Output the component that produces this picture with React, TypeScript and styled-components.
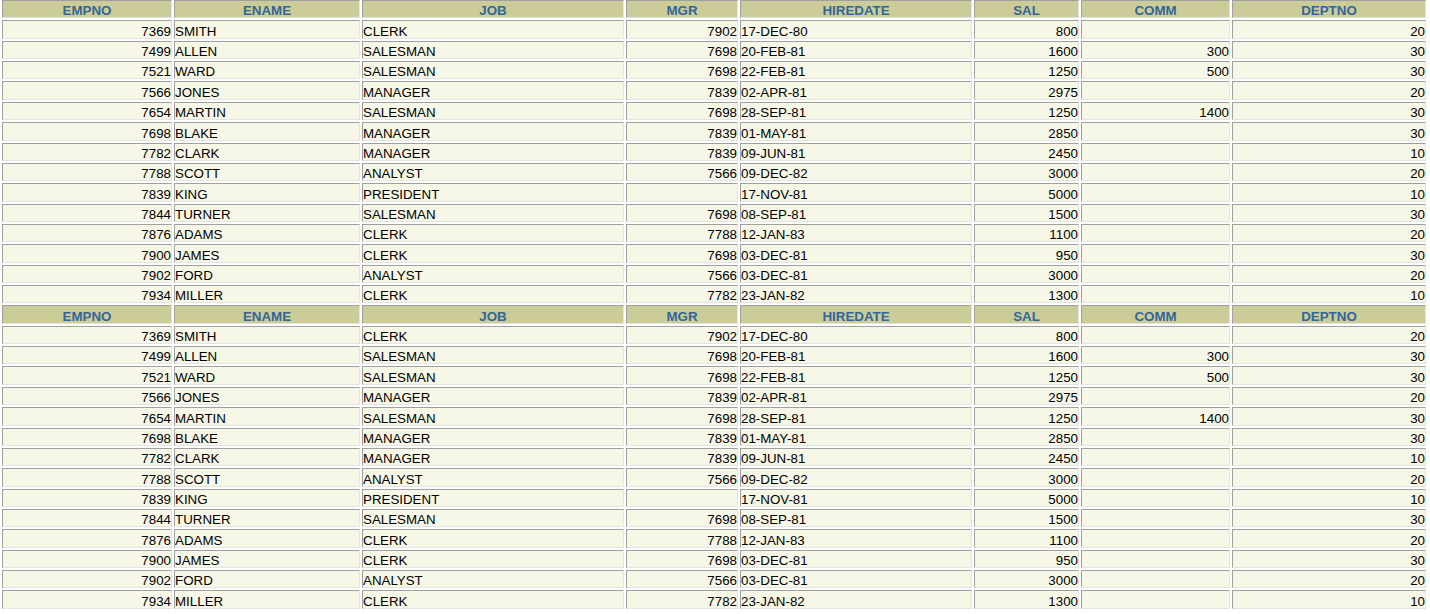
import React from "react";
import styled, { createGlobalStyle } from "styled-components";

const Global = createGlobalStyle`
  html, body { margin: 0; padding: 0; background: #ffffff; overflow: hidden; }
  body { font-family: "Liberation Sans", Arial, sans-serif; }
`;

const Table = styled.table`
  table-layout: fixed;
  width: 1428px;
  border-collapse: separate;
  border-spacing: 2px;
  margin-top: -2px;
`;

const HeadCell = styled.th<{ $w: number }>`
  box-sizing: border-box;
  width: ${(p) => p.$w}px;
  height: 18.36px;
  padding: 4.36px 0 0;
  vertical-align: top;
  font: bold 13.33px "Liberation Sans", Arial, sans-serif;
  line-height: 12px;
  color: #336699;
  background: #cccc99;
  text-align: center;
  border-style: solid;
  border-width: 1px;
  border-color: #a0a0a0 #e4e4e4 #e4e4e4 #a0a0a0;
  white-space: nowrap;
  overflow: hidden;
`;

const Cell = styled.td<{ $num?: boolean }>`
  box-sizing: border-box;
  height: 18.36px;
  padding: 4.36px 0 0;
  vertical-align: top;
  font: 13.33px "Liberation Sans", Arial, sans-serif;
  line-height: 12px;
  color: #000000;
  background: #f7f7e7;
  text-align: ${(p) => (p.$num ? "right" : "left")};
  border-style: solid;
  border-width: 1px;
  border-color: #a0a0a0 #e4e4e4 #e4e4e4 #a0a0a0;
  white-space: nowrap;
  overflow: hidden;
`;

type Emp = [number, string, string, number | null, string, number, number | null, number];

const emps: Emp[] = [
  [7369, "SMITH", "CLERK", 7902, "17-DEC-80", 800, null, 20],
  [7499, "ALLEN", "SALESMAN", 7698, "20-FEB-81", 1600, 300, 30],
  [7521, "WARD", "SALESMAN", 7698, "22-FEB-81", 1250, 500, 30],
  [7566, "JONES", "MANAGER", 7839, "02-APR-81", 2975, null, 20],
  [7654, "MARTIN", "SALESMAN", 7698, "28-SEP-81", 1250, 1400, 30],
  [7698, "BLAKE", "MANAGER", 7839, "01-MAY-81", 2850, null, 30],
  [7782, "CLARK", "MANAGER", 7839, "09-JUN-81", 2450, null, 10],
  [7788, "SCOTT", "ANALYST", 7566, "09-DEC-82", 3000, null, 20],
  [7839, "KING", "PRESIDENT", null, "17-NOV-81", 5000, null, 10],
  [7844, "TURNER", "SALESMAN", 7698, "08-SEP-81", 1500, null, 30],
  [7876, "ADAMS", "CLERK", 7788, "12-JAN-83", 1100, null, 20],
  [7900, "JAMES", "CLERK", 7698, "03-DEC-81", 950, null, 30],
  [7902, "FORD", "ANALYST", 7566, "03-DEC-81", 3000, null, 20],
  [7934, "MILLER", "CLERK", 7782, "23-JAN-82", 1300, null, 10],
];

const columns: { name: string; w: number }[] = [
  { name: "EMPNO", w: 170 },
  { name: "ENAME", w: 186 },
  { name: "JOB", w: 262 },
  { name: "MGR", w: 112 },
  { name: "HIREDATE", w: 232 },
  { name: "SAL", w: 105 },
  { name: "COMM", w: 149 },
  { name: "DEPTNO", w: 194 },
];

const HeaderRow = () => (
  <tr>
    {columns.map((c) => (
      <HeadCell key={c.name} $w={c.w}>
        {c.name}
      </HeadCell>
    ))}
  </tr>
);

const EmpRow = ({ e }: { e: Emp }) => (
  <tr>
    <Cell $num>{e[0]}</Cell>
    <Cell>{e[1]}</Cell>
    <Cell>{e[2]}</Cell>
    <Cell $num>{e[3] ?? ""}</Cell>
    <Cell>{e[4]}</Cell>
    <Cell $num>{e[5]}</Cell>
    <Cell $num>{e[6] ?? ""}</Cell>
    <Cell $num>{e[7]}</Cell>
  </tr>
);

export default function App() {
  return (
    <>
      <Global />
      <Table>
        <tbody>
          {[0, 1].map((block) => (
            <React.Fragment key={block}>
              <HeaderRow />
              {emps.map((e) => (
                <EmpRow key={`${block}-${e[0]}`} e={e} />
              ))}
            </React.Fragment>
          ))}
        </tbody>
      </Table>
    </>
  );
}
